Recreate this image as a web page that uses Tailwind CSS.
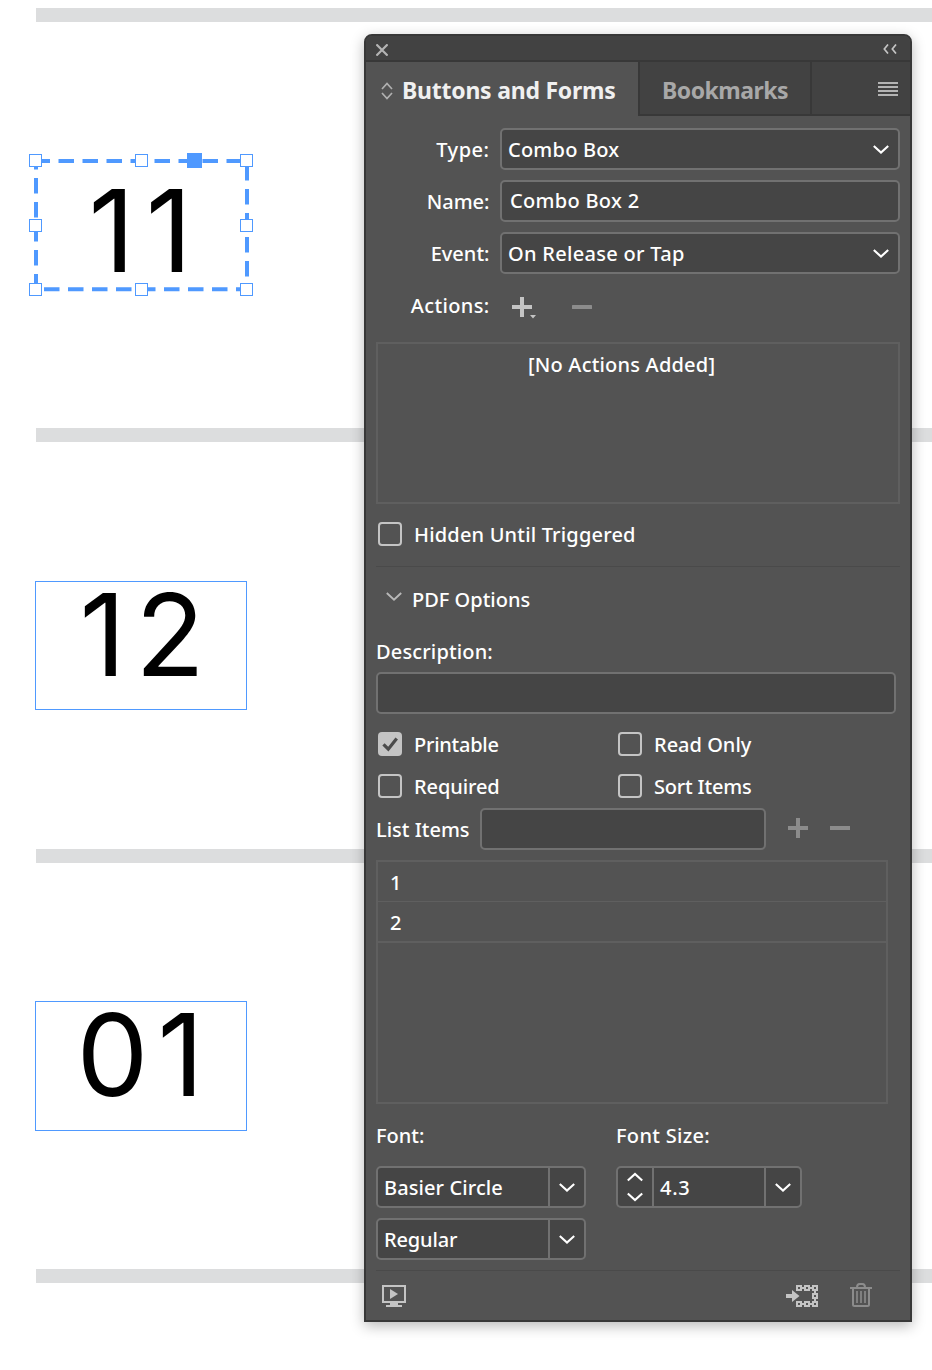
<!DOCTYPE html>
<html lang="en">
<head>
<meta charset="utf-8">
<title>Buttons and Forms</title>
<script src="https://cdn.jsdelivr.net/npm/@tailwindcss/browser@4"></script>
</head>
<body class="bg-white">
<main class="relative h-[1370px] w-[932px] overflow-hidden bg-white">
  <!-- Canvas: table rules and form fields -->
  <div class="absolute left-[36px] top-[8px] h-[14px] w-[896px] bg-[#dcddde]"></div>
  <div class="absolute left-[36px] top-[428px] h-[14px] w-[896px] bg-[#dcddde]"></div>
  <div class="absolute left-[36px] top-[849px] h-[14px] w-[896px] bg-[#dcddde]"></div>
  <div class="absolute left-[36px] top-[1269px] h-[14px] w-[896px] bg-[#dcddde]"></div>

  <svg class="absolute left-0 top-[140px]" width="270" height="170" viewBox="0 140 270 170" fill="none" stroke="#4f99ff">
    <g stroke-width="4" stroke-dasharray="15.5 8.5">
      <path d="M34.500 161H247"/>
      <path d="M247 165V289"/>
      <path d="M44 289.200H247"/>
      <path d="M36 154V289"/>
    </g>
    <g fill="#fff">
      <rect x="29.500" y="154.500" width="12" height="12"/><rect x="135.500" y="154.500" width="12" height="12"/><rect x="240.500" y="154.500" width="12" height="12"/>
      <rect x="29.500" y="219.500" width="12" height="12"/><rect x="240.500" y="219.500" width="12" height="12"/>
      <rect x="29.500" y="283.500" width="12" height="12"/><rect x="135.500" y="283.500" width="12" height="12"/><rect x="240.500" y="283.500" width="12" height="12"/>
    </g>
    <rect x="187" y="153" width="15" height="15" fill="#4f99ff" stroke="none"/>
  </svg>
  <div class="absolute left-[88.5px] top-[161px] font-['Inter',sans-serif] text-[114px] leading-[140px] tracking-[11px] text-black">11</div>
  <div class="absolute left-[35px] top-[581px] h-[129px] w-[212px] border border-[#4f99ff]"></div>
  <div class="absolute left-[79.5px] top-[565px] font-['Inter',sans-serif] text-[114px] leading-[140px] tracking-[9.5px] text-black">12</div>
  <div class="absolute left-[35px] top-[1001px] h-[130px] w-[212px] border border-[#4f99ff]"></div>
  <div class="absolute left-[76.5px] top-[985px] font-['Inter',sans-serif] text-[114px] leading-[140px] tracking-[9px] text-black">01</div>

  <!-- Floating panel -->
  <section class="absolute left-[364px] top-[34px] flex h-[1288px] w-[548px] flex-col overflow-hidden rounded-t-[8px] border-2 border-[#383838] bg-[#535353] font-['Noto_Sans',sans-serif] text-[20px] font-medium leading-[28px] text-white shadow-[0_4px_14px_rgba(0,0,0,0.28)]">
    <header class="flex h-[26px] shrink-0 items-center justify-between border-b-2 border-[#383838] bg-[#424242] pl-[10px] pr-[13px]">
      <svg width="12" height="12" viewBox="0 0 12 12" class="mt-[4px]" stroke="#b4b4b4" stroke-width="2.200"><path d="M.4.400 11.600 11.600M11.600.400.400 11.600"/></svg>
      <svg width="14" height="10" viewBox="0 0 14 10" class="mt-[2px]" fill="none" stroke="#c4c4c4" stroke-width="1.700"><path d="M5 .5 1.300 5 5 9.500M13 .5 9.300 5 13 9.500"/></svg>
    </header>
    <nav class="flex h-[54px] shrink-0 text-[23px] font-bold">
      <div class="flex w-[272px] items-center pl-[15px]">
        <svg width="12" height="18" viewBox="0 0 12 18" class="mt-[3px]" fill="none" stroke="#b0b0b0" stroke-width="1.700"><path d="M1 7 6 1.500 11 7M1 11 6 16.500 11 11"/></svg>
        <span class="ml-[9px] mt-px whitespace-nowrap tracking-[-0.24px] text-[#f0f0f0]">Buttons and Forms</span>
      </div>
      <div class="flex w-[174px] items-center border-x-2 border-b-2 border-[#383838] bg-[#424242] pl-[22px] pt-[3px] tracking-[-0.5px] text-[#a8a8a8]">Bookmarks</div>
      <div class="flex flex-1 items-center justify-end border-b-2 border-[#383838] bg-[#424242] pr-[12px] pt-[2px]">
        <svg width="20" height="14" viewBox="0 0 20 14" fill="#b4b4b4"><path d="M0 0h20v2H0zM0 4h20v2H0zM0 8h20v2H0zM0 12h20v2H0z"/></svg>
      </div>
    </nav>

    <div class="flex flex-1 flex-col pl-[10px] pr-[10px]">
      <div class="mt-[12px] flex h-[42px] items-center">
        <span class="mt-[2px] w-[114px] pr-[0.5px] text-right tracking-[0.5px]">Type:</span>
        <div class="ml-[10px] flex h-[42px] w-[400px] items-center justify-between rounded-[5px] border-2 border-[#717171] bg-[#454545] pl-[6px] pr-[9px]"><span class="mt-[2px] tracking-[0.22px]">Combo Box</span>
          <svg width="16" height="9" viewBox="0 0 16 9" fill="none" stroke="#fff" stroke-width="2.100"><path d="M.8 1 8 7.600 15.200 1"/></svg></div>
      </div>
      <div class="mt-[10px] flex h-[42px] items-center">
        <span class="mt-[2px] w-[114px] pr-[0.5px] text-right">Name:</span>
        <div class="ml-[10px] flex h-[42px] w-[400px] items-center rounded-[5px] border-2 border-[#717171] bg-[#454545] pl-[8px] tracking-[0.3px]">Combo Box 2</div>
      </div>
      <div class="mt-[10px] flex h-[42px] items-center">
        <span class="mt-[2px] w-[114px] pr-[0.5px] text-right">Event:</span>
        <div class="ml-[10px] flex h-[42px] w-[400px] items-center justify-between rounded-[5px] border-2 border-[#717171] bg-[#454545] pl-[6px] pr-[9px]"><span class="mt-[2px] tracking-[0.3px]">On Release or Tap</span>
          <svg width="16" height="9" viewBox="0 0 16 9" fill="none" stroke="#fff" stroke-width="2.100"><path d="M.8 1 8 7.600 15.200 1"/></svg></div>
      </div>
      <div class="mt-[18px] flex h-[28px] items-center">
        <span class="w-[114px] pr-[0.5px] text-right tracking-[0.35px]">Actions:</span>
        <svg width="26" height="24" viewBox="0 0 26 24" class="ml-[22px] mt-[2px]" fill="#c4c4c4"><path d="M8 2h4v8h8v4h-8v8H8v-8H0v-4h8zM18 20h6l-3 3.500z"/></svg>
        <svg width="20" height="4" viewBox="0 0 20 4" class="ml-[34px] mt-[2px]" fill="#8c8c8c"><rect width="20" height="4" rx=".5"/></svg>
      </div>
      <div class="mt-[22px] h-[162px] w-[524px] border-2 border-[#5f5f5f] pl-[150px] pt-[7px] tracking-[0.2px]">[No Actions Added]</div>
      <div class="mt-[18px] flex h-[24px] items-center pl-[2px]">
        <i class="h-[24px] w-[24px] rounded-[4px] border-2 border-[#c4c4c4]"></i><span class="ml-[12px] mt-[2px] tracking-[0.18px]">Hidden Until Triggered</span>
      </div>
      <div class="mt-[20px] h-px w-[524px] bg-[#4a4a4a]"></div>
      <div class="mt-[18px] flex h-[28px] items-center pl-[10px]">
        <svg width="16" height="9" viewBox="0 0 16 9" class="-mt-[6px]" fill="none" stroke="#b8b8b8" stroke-width="1.900"><path d="M.8 1 8 7.600 15.200 1"/></svg>
        <span class="ml-[10px] mt-[2px]">PDF Options</span>
      </div>
      <div class="mt-[25px] h-[28px] tracking-[0.15px]">Description:</div>
      <div class="mt-[6px] h-[42px] w-[520px] rounded-[5px] border-2 border-[#717171] bg-[#454545]"></div>
      <div class="mt-[18px] grid grid-cols-[240px_240px] gap-y-[18px] pl-[2px]">
        <div class="flex h-[24px] items-center">
          <svg width="24" height="24" viewBox="0 0 24 24"><rect width="24" height="24" rx="4" fill="#c4c4c4"/><path d="M5.500 12.300 10.300 17.200 18.700 6.500" fill="none" stroke="#4b4b4b" stroke-width="3.200"/></svg>
          <span class="ml-[12px] mt-[2px] tracking-[-0.25px]">Printable</span></div>
        <div class="flex h-[24px] items-center"><i class="h-[24px] w-[24px] rounded-[4px] border-2 border-[#c4c4c4]"></i><span class="ml-[12px] mt-[2px]">Read Only</span></div>
        <div class="flex h-[24px] items-center"><i class="h-[24px] w-[24px] rounded-[4px] border-2 border-[#c4c4c4]"></i><span class="ml-[12px] mt-[2px] tracking-[-0.1px]">Required</span></div>
        <div class="flex h-[24px] items-center"><i class="h-[24px] w-[24px] rounded-[4px] border-2 border-[#c4c4c4]"></i><span class="ml-[12px] mt-[2px] tracking-[-0.2px]">Sort Items</span></div>
      </div>
      <div class="mt-[10px] flex h-[42px] items-center">
        <span class="mt-[2px] w-[104px] whitespace-nowrap">List Items</span>
        <div class="h-[42px] w-[286px] rounded-[5px] border-2 border-[#717171] bg-[#454545]"></div>
        <svg width="62" height="20" viewBox="0 0 62 20" class="-mt-[2px] ml-[22px]" fill="#8c8c8c"><path d="M8 0h4v8h8v4h-8v8H8v-8H0V8h8zM42 8h20v4H42z"/></svg>
      </div>
      <div class="mt-[10px] h-[244px] w-[512px] border-2 border-[#5f5f5f]">
        <div class="h-[40px] border-b border-[#5f5f5f] pl-[12px] pt-[7px]">1</div>
        <div class="h-[41px] border-b-2 border-[#5f5f5f] pl-[12px] pt-[7px]">2</div>
      </div>
      <div class="mt-[18px] grid h-[28px] grid-cols-[240px_200px]"><span>Font:</span><span class="tracking-[0.3px]">Font Size:</span></div>
      <div class="mt-[16px] flex gap-[30px]">
        <div class="flex h-[42px] w-[210px] overflow-hidden rounded-[5px] border-2 border-[#717171] bg-[#454545]">
          <span class="flex w-[170px] items-center pl-[6px] pt-[2px] tracking-[0.1px]">Basier Circle</span>
          <span class="flex flex-1 items-center justify-center border-l-2 border-[#717171]"><svg width="16" height="9" viewBox="0 0 16 9" fill="none" stroke="#fff" stroke-width="2.100"><path d="M.8 1 8 7.600 15.200 1"/></svg></span>
        </div>
        <div class="flex h-[42px] w-[186px] overflow-hidden rounded-[5px] border-2 border-[#717171] bg-[#454545]">
          <span class="flex w-[34px] items-center justify-center"><svg width="16" height="30" viewBox="0 0 16 30" fill="none" stroke="#fff" stroke-width="2.100"><path d="M.8 8.600 8 2 15.200 8.600M.8 21.400 8 28 15.200 21.400"/></svg></span>
          <span class="flex w-[112px] items-center border-l-2 border-[#717171] pl-[6px] pt-[2px] tracking-[0.7px]">4.3</span>
          <span class="flex flex-1 items-center justify-center border-l-2 border-[#717171]"><svg width="16" height="9" viewBox="0 0 16 9" fill="none" stroke="#fff" stroke-width="2.100"><path d="M.8 1 8 7.600 15.200 1"/></svg></span>
        </div>
      </div>
      <div class="mt-[10px] flex h-[42px] w-[210px] overflow-hidden rounded-[5px] border-2 border-[#717171] bg-[#454545]">
        <span class="flex w-[170px] items-center pl-[6px] pt-[2px] tracking-[-0.15px]">Regular</span>
        <span class="flex flex-1 items-center justify-center border-l-2 border-[#717171]"><svg width="16" height="9" viewBox="0 0 16 9" fill="none" stroke="#fff" stroke-width="2.100"><path d="M.8 1 8 7.600 15.200 1"/></svg></span>
      </div>
      <div class="mt-[10px] h-px w-[524px] bg-[#4a4a4a]"></div>
      <footer class="flex items-start pl-[6px] pt-[12px]">
        <svg width="24" height="22" viewBox="0 0 24 22" class="mt-[2px]" fill="#c4c4c4"><path fill-rule="evenodd" d="M0 0h24v18H16v2h4v2H4v-2h4v-2H0zM2 2v14h20V2z"/><path d="M8 4v10l8-5z"/></svg>
        <svg width="32" height="22" viewBox="0 0 32 22" class="ml-[380px] mt-[2px]" fill="#c4c4c4">
          <path d="M0 9h6V5l7.500 6L6 17v-4H0z"/>
          <path fill-rule="evenodd" d="M10 0h6v2h2V0h6v2h2V0h6v6h-2v2h2v6h-2v2h2v6h-6v-2h-2v2h-6v-2h-2v2h-6v-6h6v2h2v-2h6v2h2v-2h2v-2h-2V8h2V6h-2V4h-2v2h-6V4h-2v2h-6zM12 2v2h2V2zM20 2v2h2V2zM28 2v2h2V2zM28 10v2h2v-2zM12 18v2h2v-2zM20 18v2h2v-2zM28 18v2h2v-2z"/>
        </svg>
        <svg width="22" height="24" viewBox="0 0 22 24" class="ml-[32px]" fill="none" stroke="#8c8c8c" stroke-width="2"><path d="M0 5H22M7 4.500C7 2 8 1 9.500 1h3C14 1 15 2 15 4.500M3 5V21.500Q3 23 4.500 23H17.500Q19 23 19 21.500V5"/><path d="M7 8V20M11 8V20M15 8V20" stroke-width="1.600"/></svg>
      </footer>
    </div>
  </section>
</main>
</body>
</html>
